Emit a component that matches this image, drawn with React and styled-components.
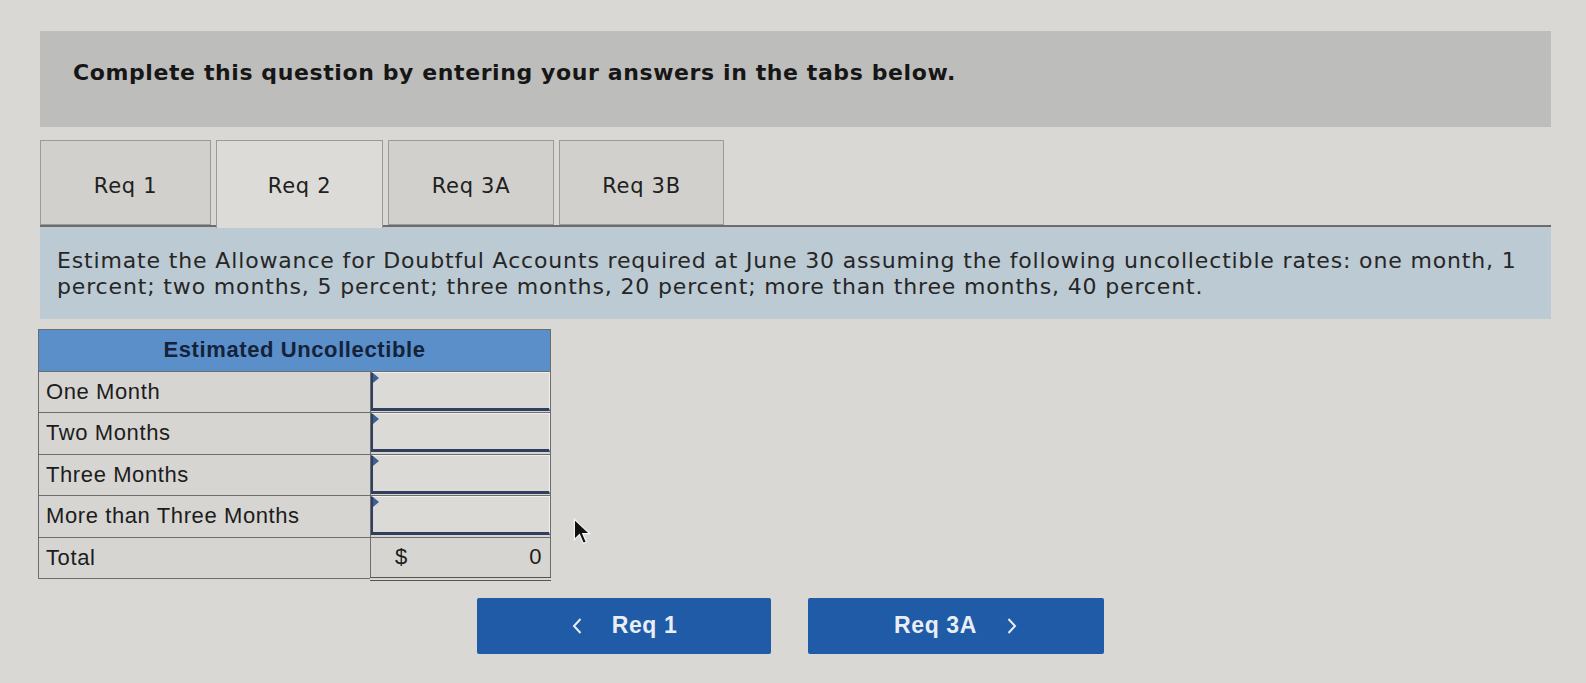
import React from 'react';
import styled, { createGlobalStyle } from 'styled-components';

const GlobalStyle = createGlobalStyle`
  html, body {
    margin: 0;
    padding: 0;
    background: #d9d8d5;
  }
  body {
    font-family: "DejaVu Sans", Verdana, sans-serif;
    color: #1e1e1e;
  }
`;

const rows = ['One Month', 'Two Months', 'Three Months', 'More than Three Months'];
const tabs = [
  { label: 'Req 1', width: 171 },
  { label: 'Req 2', width: 167, active: true },
  { label: 'Req 3A', width: 166 },
  { label: 'Req 3B', width: 165 },
];

const App = () => {
  return (
    <React.Fragment>
      <GlobalStyle />
      <Page>
        <Question>
          <Banner>Complete this question by entering your answers in the tabs below.</Banner>
          <TabBar>
            {tabs.map((t) => (
              <Tab key={t.label} $width={t.width} $active={t.active}>
                {t.label}
              </Tab>
            ))}
          </TabBar>
          <Instructions>
            Estimate the Allowance for Doubtful Accounts required at June 30 assuming the following uncollectible rates: one month, 1
            percent; two months, 5 percent; three months, 20 percent; more than three months, 40 percent.
          </Instructions>
          <Sheet>
            <thead>
              <tr>
                <HeadCell colSpan={2}>Estimated Uncollectible</HeadCell>
              </tr>
            </thead>
            <tbody>
              {rows.map((r) => (
                <tr key={r}>
                  <LabelCell>{r}</LabelCell>
                  <InputCell>
                    <Entry />
                  </InputCell>
                </tr>
              ))}
              <tr>
                <LabelCell>Total</LabelCell>
                <TotalCell>
                  <TotalValue>
                    <span>$</span>
                    <span>0</span>
                  </TotalValue>
                </TotalCell>
              </tr>
            </tbody>
          </Sheet>
          <NavRow>
            <NavButton $width={294}>
              <Chevron viewBox="0 0 12 18">
                <path d="M9.5 2 L3 9 L9.5 16" />
              </Chevron>
              Req 1
            </NavButton>
            <NavButton $width={296}>
              Req 3A
              <Chevron viewBox="0 0 12 18">
                <path d="M2.5 2 L9 9 L2.5 16" />
              </Chevron>
            </NavButton>
          </NavRow>
          <Pointer viewBox="0 0 14 22">
            <path d="M1 1 L1 17 L5 13 L8 20 L10.5 19 L7.6 12.2 L13 12.2 Z" />
          </Pointer>
        </Question>
      </Page>
    </React.Fragment>
  );
};

const Page = styled.div`
  padding: 31px 0 0 40px;
`;

const Question = styled.div`
  position: relative;
  width: 1511px;
  display: flex;
  flex-direction: column;
`;

const Banner = styled.div`
  height: 96px;
  box-sizing: border-box;
  background: #bdbdbc;
  padding: 29px 0 0 33px;
  font-size: 22px;
  letter-spacing: 0.6px;
  font-weight: bold;
  color: #161616;
`;

const TabBar = styled.div`
  display: flex;
  gap: 5px;
  margin-top: 13px;
  align-items: flex-end;
`;

const Tab = styled.div`
  width: ${(p) => p.$width}px;
  height: ${(p) => (p.$active ? 88 : 85)}px;
  margin-bottom: ${(p) => (p.$active ? -3 : 0)}px;
  box-sizing: border-box;
  display: flex;
  align-items: center;
  justify-content: center;
  padding-top: ${(p) => (p.$active ? 3 : 6)}px;
  border: 1px solid #9a9a99;
  border-bottom: ${(p) => (p.$active ? 'none' : '1px solid #9a9a99')};
  background: ${(p) => (p.$active ? '#dcdbd8' : '#d1d0cd')};
  font-size: 21px;
  letter-spacing: 0.7px;
  color: #202020;
  position: relative;
  z-index: ${(p) => (p.$active ? 2 : 0)};
`;

const Instructions = styled.div`
  height: 94px;
  box-sizing: border-box;
  border-top: 2px solid #6c6c6c;
  background: #bccad4;
  padding: 21px 10px 0 17px;
  font-size: 22px;
  letter-spacing: 0.85px;
  line-height: 26px;
  color: #262626;
`;

const Sheet = styled.table`
  margin: 10px 0 0 -2px;
  width: 513px;
  border-collapse: collapse;
  font-family: "Liberation Sans", Arial, sans-serif;
  font-size: 22px;
  letter-spacing: 0.6px;
  color: #1c1c1c;

  tr {
    height: 41.5px;
  }
`;

const HeadCell = styled.th`
  padding: 0;
  background: #5a8fca;
  border: 1px solid #6d6d6d;
  color: #14223a;
  font-weight: bold;
  text-align: center;
`;

const LabelCell = styled.td`
  width: 332px;
  padding: 0 0 0 7px;
  box-sizing: border-box;
  border: 1px solid #6d6d6d;
  background: #d6d5d2;
`;

const InputCell = styled.td`
  padding: 0;
  border: 1px solid #6d6d6d;
  border-bottom: none;
  background: #d6d5d2;
  vertical-align: top;
`;

const Entry = styled.div`
  position: relative;
  height: 39px;
  box-sizing: border-box;
  border-left: 2px solid #2f3f5c;
  border-bottom: 3px solid #2f3f5c;
  border-top: 1px solid #efefef;
  border-right: 1px solid #efefef;
  background: #dbdad7;
  &::before {
    content: '';
    position: absolute;
    left: 0;
    top: 0;
    border-top: 5px solid transparent;
    border-bottom: 5px solid transparent;
    border-left: 6px solid #3e5f96;
  }
`;

const TotalCell = styled.td`
  padding: 0;
  border: 1px solid #6d6d6d;
  border-bottom: 4px double #555;
  background: #d6d5d2;
`;

const TotalValue = styled.div`
  display: flex;
  justify-content: space-between;
  padding: 0 8px 0 24px;
`;

const NavRow = styled.div`
  display: flex;
  gap: 37px;
  margin: 17px 0 0 437px;
`;

const NavButton = styled.div`
  width: ${(p) => p.$width}px;
  height: 56px;
  display: flex;
  align-items: center;
  justify-content: center;
  gap: 29px;
  background: #1f5ba7;
  border-radius: 2px;
  color: #e9eef4;
  font-family: "Liberation Sans", Arial, sans-serif;
  font-weight: bold;
  font-size: 23px;
  letter-spacing: 0.6px;
`;

const Chevron = styled.svg`
  width: 12px;
  height: 18px;
  fill: none;
  stroke: #e9eef4;
  stroke-width: 2;
`;

const Pointer = styled.svg`
  position: absolute;
  left: 533px;
  top: 487px;
  width: 18px;
  height: 28px;
  fill: #111;
  stroke: #f4f4f4;
  stroke-width: 1;
`;

export default App;
